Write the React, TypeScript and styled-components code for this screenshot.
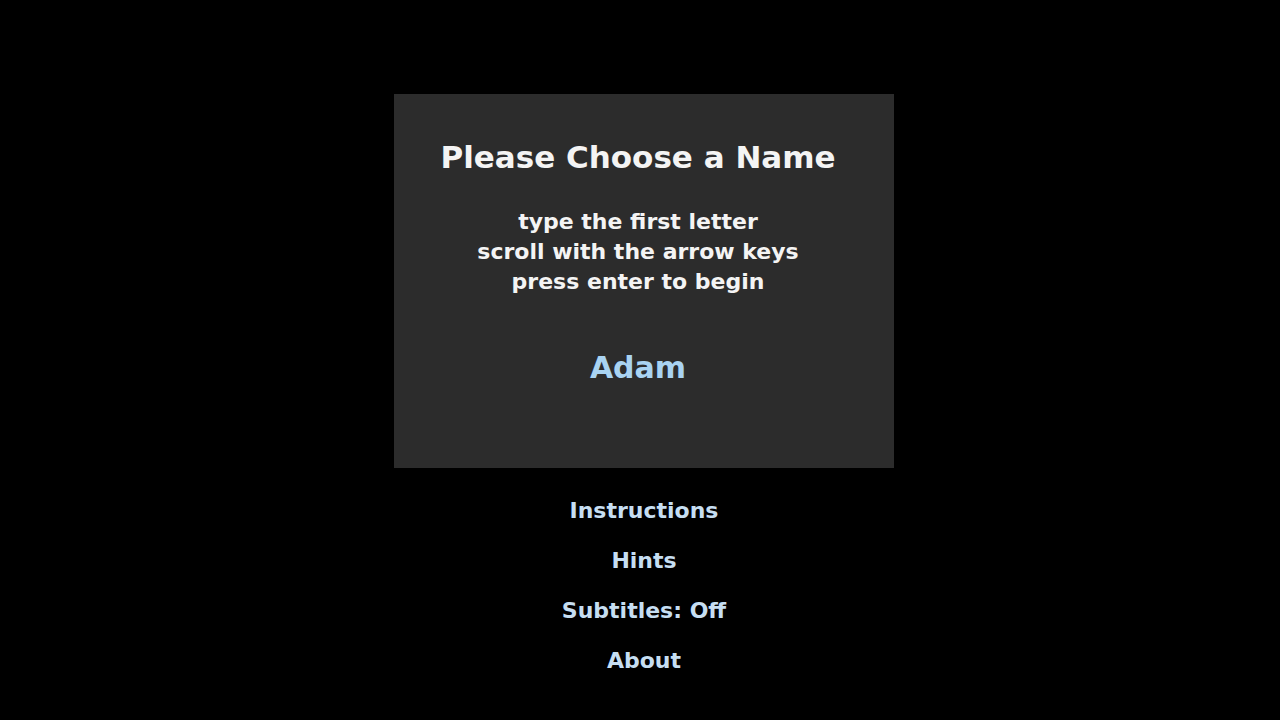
import React from 'react';
import styled, { createGlobalStyle } from 'styled-components';

const GlobalStyle = createGlobalStyle`
  html, body {
    margin: 0;
    padding: 0;
    background: #000;
    height: 100%;
  }
  body {
    font-family: "Comic Sans MS", "DejaVu Sans", sans-serif;
  }
`;

const Screen = styled.div`
  width: 1280px;
  height: 720px;
  box-sizing: border-box;
  padding-left: 8px;
  background: #000;
  display: flex;
  flex-direction: column;
  align-items: center;
  overflow: hidden;
`;

const Panel = styled.div`
  margin-top: 94px;
  width: 500px;
  height: 374px;
  box-sizing: border-box;
  background: #2c2c2c;
  display: flex;
  flex-direction: column;
  align-items: center;
  padding: 38px 12px 0 0;
  color: #f4f4f4;
`;

const Title = styled.div`
  font-size: 31px;
  font-weight: bold;
  line-height: 50px;
`;

const Help = styled.div`
  margin-top: 25px;
  font-size: 22px;
  font-weight: bold;
  line-height: 30px;
  text-align: center;
`;

const Name = styled.div`
  margin-top: 48px;
  font-size: 30px;
  font-weight: bold;
  line-height: 46px;
  color: #a9d3f2;
`;

const Menu = styled.nav`
  margin-top: 18px;
  display: flex;
  flex-direction: column;
  align-items: center;
`;

const MenuItem = styled.div`
  font-size: 22px;
  font-weight: bold;
  line-height: 50px;
  color: #c6def2;
`;

const items = ['Instructions', 'Hints', 'Subtitles: Off', 'About'];

const App: React.FC = () => {
  return (
    <Screen>
      <GlobalStyle />
      <Panel>
        <Title>Please Choose a Name</Title>
        <Help>
          type the first letter
          <br />
          scroll with the arrow keys
          <br />
          press enter to begin
        </Help>
        <Name>Adam</Name>
      </Panel>
      <Menu>
        {items.map((item) => (
          <MenuItem key={item}>{item}</MenuItem>
        ))}
      </Menu>
    </Screen>
  );
};

export default App;
